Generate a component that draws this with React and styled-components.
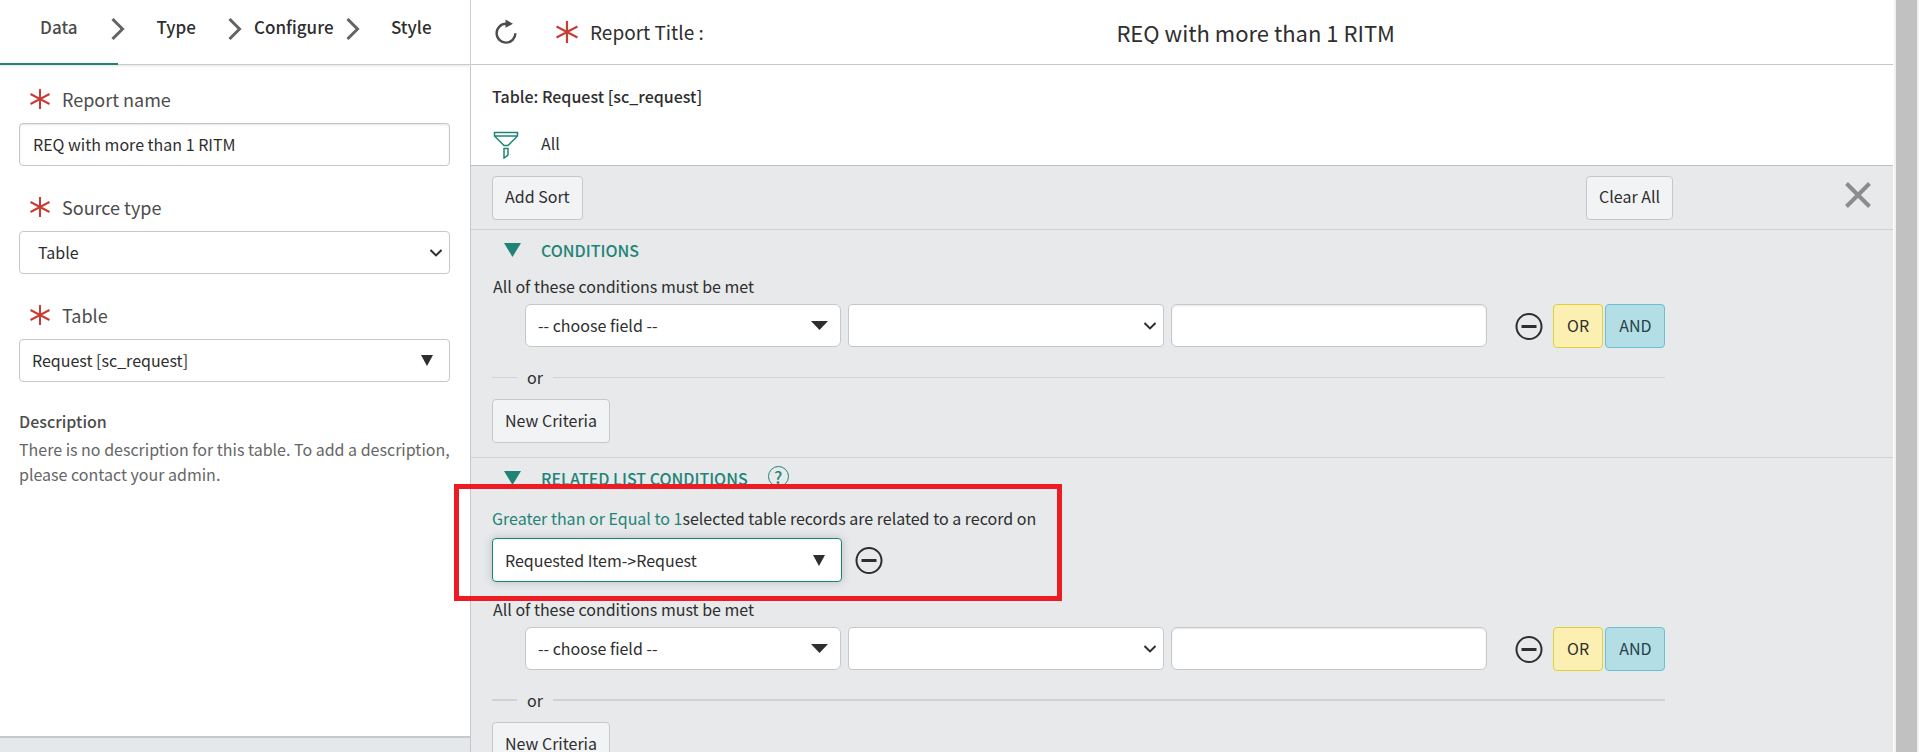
import React, { Fragment, useState } from "react";
import styled, { createGlobalStyle } from "styled-components";

const GlobalStyle = createGlobalStyle`
  * {
    box-sizing: border-box;
  }

  body {
    margin: 0;
    background: #fff;
    color: #2e2e2e;
    font-family: "Noto Sans CJK SC", "Noto Sans", sans-serif;
    font-size: 16px;
    line-height: 24px;
  }

  button,
  input,
  select {
    font: inherit;
    color: inherit;
  }
`;

const Page = styled.div`
  display: flex;
  height: 100vh;
  overflow: hidden;
`;

const Sidebar = styled.aside`
  display: flex;
  flex-direction: column;
  flex: 0 0 471px;
  border-right: 1px solid #c5c8ca;
`;

const Tabs = styled.nav`
  display: flex;
  align-items: center;
  height: 65px;
  border-bottom: 1px solid #cbcbcb;
  box-shadow: 0 1px 2px #e4e4e4;

  svg {
    flex: none;
    margin: 0 -7px 6px;
  }
`;

const Tab = styled.button`
  flex: 1 1 0;
  min-width: 0;
  height: 65px;
  padding: 0 0 8px;
  border: 0;
  border-bottom: 2px solid ${(props) => (props.$active ? "#1f8476" : "transparent")};
  background: none;
  color: ${(props) => (props.$active ? "#4c4c4c" : "#2e2e2e")};
  font-size: 17px;
  font-weight: 500;
  white-space: nowrap;
`;

const Form = styled.form`
  flex: 1;
  padding: 20px 20px 0 19px;
`;

const Field = styled.div`
  margin-bottom: 27px;
`;

const FieldLabel = styled.label`
  display: flex;
  align-items: center;
  gap: 12px;
  height: 28px;
  margin-bottom: 10px;
  padding-left: 11px;
  color: #4c4c4c;
  font-size: 18px;
`;

const TextInput = styled.input`
  display: block;
  width: 100%;
  height: 43px;
  padding: 0 13px 1px;
  border: 1px solid #c5c8ca;
  border-radius: ${(props) => props.$radius || 4}px;
  background: #fff;
  box-shadow: inset 0 1px 2px #e6e6e6;
`;

const SelectBox = styled.div`
  display: grid;
  align-items: center;
  width: ${(props) => props.$width || "100%"};

  > * {
    grid-area: 1 / 1;
  }

  svg {
    justify-self: end;
    margin-right: ${(props) => props.$inset || 8}px;
    pointer-events: none;
  }
`;

const Select = styled.select`
  width: 100%;
  height: ${(props) => (props.$focused ? 44 : 43)}px;
  padding: 0 36px 1px ${(props) => props.$pad || 12}px;
  appearance: none;
  border: 1px solid ${(props) => (props.$focused ? "#1f8476" : "#c5c8ca")};
  border-radius: ${(props) => props.$radius || 4}px;
  background: #fff;
  box-shadow: ${(props) => (props.$focused ? "0 0 8px #b5bdbd" : "none")};
`;

const Description = styled.section`
  color: #666;
  line-height: 25px;

  h2 {
    margin: 0 0 3px;
    color: #4c4c4c;
    font-size: 16px;
    font-weight: 500;
    line-height: 25px;
  }

  p {
    margin: 0;
  }
`;

const SidebarFooter = styled.footer`
  height: 16px;
  border-top: 2px solid #c8c8c8;
  background: #e4e8eb;
`;

const Main = styled.main`
  flex: 1;
  min-width: 0;
  border-right: 1px solid #fff;
`;

const Header = styled.header`
  display: flex;
  align-items: center;
  height: 65px;
  padding-left: 21px;
  border-bottom: 1px solid #c5c8ca;
`;

const IconButton = styled.button`
  display: flex;
  align-items: center;
  justify-content: center;
  width: 28px;
  height: 28px;
  padding: 0;
  border: 0;
  background: none;
  color: inherit;
`;

const TitleLabel = styled.label`
  display: flex;
  flex: 0 0 40%;
  align-items: center;
  gap: 12px;
  margin-left: 36px;
  font-size: 19px;
`;

const TitleInput = styled.input`
  flex: 1;
  min-width: 0;
  padding: 0;
  border: 0;
  background: none;
  font-size: 22px;
`;

const TableName = styled.h2`
  margin: 19px 0 0 21px;
  font-size: 16px;
  font-weight: 500;
  line-height: 24px;
`;

const Breadcrumb = styled.div`
  display: flex;
  align-items: center;
  gap: 22px;
  height: 44px;
  margin-top: 13px;
  padding-left: 22px;

  svg {
    margin-top: 4px;
  }

  a {
    color: inherit;
    text-decoration: none;
  }
`;

const FilterPanel = styled.div`
  border-top: 1px solid #bcc0c3;
  background: #e7e9eb;
`;

const Toolbar = styled.div`
  display: flex;
  align-items: center;
  justify-content: flex-end;
  height: 63px;
  padding: 0 21px;

  ${IconButton} {
    margin-bottom: 6px;
  }
`;

const Button = styled.button`
  height: 44px;
  padding: 0 12px 3px;
  border: 1px solid #c5c8ca;
  border-radius: 4px;
  background: #f1f3f5;
  white-space: nowrap;
`;

const AddSort = styled(Button)`
  margin-right: auto;
`;

const ClearAll = styled(Button)`
  margin-right: 171px;
`;

const Section = styled.section`
  padding: 8px 16% 14px 21px;
  border-top: 1px solid #cfd2d5;
`;

const SectionTitle = styled.h3`
  display: flex;
  align-items: center;
  gap: 20px;
  height: 24px;
  margin: 0;
  padding-left: 12px;
  color: #1f8476;
  font-size: 16px;
  font-weight: 500;
`;

const Hint = styled.p`
  margin: 0;
  padding: 12px 0 6px 1px;
`;

const ConditionRow = styled.div`
  display: grid;
  grid-template-columns: repeat(3, 1fr) auto;
  align-items: start;
  gap: 7px;
  padding-left: 33px;
`;

const RowActions = styled.div`
  display: flex;
  align-items: center;
  gap: 2px;
  margin-left: 21px;
`;

const LogicButton = styled(Button)`
  padding: 0 13px 3px;
  border-color: ${(props) => (props.$kind === "or" ? "#dfd037" : "#6cbfd3")};
  background: ${(props) => (props.$kind === "or" ? "#fbf0b2" : "#b4dee6")};
  color: ${(props) => (props.$kind === "or" ? "#2e2e2e" : "#264247")};

  ${IconButton} + & {
    margin-left: 8px;
  }
`;

const Divider = styled.div`
  display: flex;
  align-items: center;
  gap: 10px;
  margin: 17px 0 10px;

  &::before,
  &::after {
    content: "";
    width: 25px;
    height: ${(props) => props.$weight}px;
    background: #cfd3d6;
  }

  &::after {
    flex: 1;
  }
`;

const Relation = styled.div`
  position: relative;
  padding: 16px 0 3px;

  p {
    margin: 0 0 8px;
  }

  a {
    color: #1f8476;
    text-decoration: none;
  }
`;

const RelationPicker = styled.div`
  display: flex;
  align-items: center;
  gap: 13px;
`;

// red frame drawn over the relation, it also covers part of the heading
const Highlight = styled.div`
  position: absolute;
  top: -6px;
  left: -38px;
  width: 608px;
  height: 117px;
  border: 5px solid #ed1c24;
  pointer-events: none;
`;

const Scrollbar = styled.div`
  flex: 0 0 25px;
  padding: 0 2px;
  background: #f1f1f1;

  &::before {
    content: "";
    display: block;
    height: 100%;
    background: #c1c1c1;
  }
`;

const Required = ({ size = 20 }) => (
  <svg width={size} height={size} viewBox="0 0 20 20" stroke="#c83c36" strokeWidth="2" aria-hidden="true">
    <path d="M10 0V20M0.5 5L19.5 15M19.5 5L0.5 15" />
  </svg>
);

const Arrow = () => (
  <svg width="14" height="24" viewBox="0 0 14 24" fill="none" stroke="#636363" strokeWidth="3" aria-hidden="true">
    <path d="M1.5 2L11.5 12L1.5 22" />
  </svg>
);

const Chevron = () => (
  <svg width="12" height="8" viewBox="0 0 12 8" fill="none" stroke="#2e2e2e" strokeWidth="2" aria-hidden="true">
    <path d="M0.5 1L6 6.4L11.5 1" />
  </svg>
);

const Triangle = ({ width = 12, height = 11, color = "#2e2e2e" }) => (
  <svg width={width} height={height} viewBox="0 0 12 12" preserveAspectRatio="none" fill={color} aria-hidden="true">
    <path d="M0 0H12L6 12Z" />
  </svg>
);

const Refresh = () => (
  <svg width="22" height="26" viewBox="0 0 22 26" aria-hidden="true">
    <path d="M13 4.8H11A9.4 9.4 0 1 0 20.4 14.2" fill="none" stroke="#4c4c4c" strokeWidth="2.4" />
    <path d="M10.5 0.5L18 4.8L10.5 8.8Z" fill="#4c4c4c" />
  </svg>
);

const Funnel = () => (
  <svg width="26" height="28" viewBox="0 0 26 28" fill="none" stroke="#1f8476" strokeWidth="1.5" aria-hidden="true">
    <path d="M1.5 1.5H24.5V5L15 14.5H11L1.5 5ZM1.5 5H24.5M11 17.5H15V24L11 27Z" />
  </svg>
);

const Minus = () => (
  <svg width="28" height="28" viewBox="0 0 28 28" fill="none" stroke="#2e2e2e" aria-hidden="true">
    <circle cx="14" cy="14.5" r="12.5" strokeWidth="2" />
    <path d="M6.5 14.5H21.5" strokeWidth="3" />
  </svg>
);

const Close = () => (
  <svg width="26" height="26" viewBox="0 0 26 26" stroke="#8b8c8d" strokeWidth="4" aria-hidden="true">
    <path d="M1.5 1.5L24.5 24.5M24.5 1.5L1.5 24.5" />
  </svg>
);

const HelpMark = styled.button`
  width: 21px;
  height: 21px;
  margin-bottom: 4px;
  padding: 0;
  border: 1px solid #1f8476;
  border-radius: 50%;
  background: none;
  color: #1f8476;
  font-size: 17px;
  font-weight: 500;
  line-height: 17px;
`;

const tabs = ["Data", "Type", "Configure", "Style"];

const Conditions = ({ name, lineWeight = 1 }) => (
  <>
    <Hint>All of these conditions must be met</Hint>
    <ConditionRow>
      <SelectBox $inset={13}>
        <Select $radius={6} aria-label={`${name} field`}>
          <option>-- choose field --</option>
        </Select>
        <Triangle width={17} height={9} />
      </SelectBox>
      <SelectBox>
        <Select aria-label={`${name} operator`} />
        <Chevron />
      </SelectBox>
      <TextInput $radius={6} aria-label={`${name} value`} />
      <RowActions>
        <IconButton type="button" aria-label="Remove condition">
          <Minus />
        </IconButton>
        <LogicButton type="button" $kind="or">
          OR
        </LogicButton>
        <LogicButton type="button" $kind="and">
          AND
        </LogicButton>
      </RowActions>
    </ConditionRow>
    <Divider $weight={lineWeight}>or</Divider>
    <Button type="button">New Criteria</Button>
  </>
);

const App = () => {
  const [active, setActive] = useState("Data");
  const [name, setName] = useState("REQ with more than 1 RITM");

  return (
    <>
      <GlobalStyle />
      <Page>
        <Sidebar>
          <Tabs>
            {tabs.map((tab, index) => (
              <Fragment key={tab}>
                {index > 0 && <Arrow />}
                <Tab type="button" $active={tab === active} onClick={() => setActive(tab)}>
                  {tab}
                </Tab>
              </Fragment>
            ))}
          </Tabs>
          <Form>
            <Field>
              <FieldLabel htmlFor="report-name">
                <Required />
                Report name
              </FieldLabel>
              <TextInput id="report-name" value={name} onChange={(e) => setName(e.target.value)} />
            </Field>
            <Field>
              <FieldLabel htmlFor="source-type">
                <Required />
                Source type
              </FieldLabel>
              <SelectBox>
                <Select id="source-type" $pad={18}>
                  <option>Table</option>
                </Select>
                <Chevron />
              </SelectBox>
            </Field>
            <Field>
              <FieldLabel htmlFor="table">
                <Required />
                Table
              </FieldLabel>
              <SelectBox $inset={17}>
                <Select id="table">
                  <option>Request [sc_request]</option>
                </Select>
                <Triangle />
              </SelectBox>
            </Field>
            <Description>
              <h2>Description</h2>
              <p>There is no description for this table. To add a description, please contact your admin.</p>
            </Description>
          </Form>
          <SidebarFooter />
        </Sidebar>
        <Main>
          <Header>
            <IconButton type="button" aria-label="Refresh">
              <Refresh />
            </IconButton>
            <TitleLabel htmlFor="report-title">
              <Required size={22} />
              Report Title :
            </TitleLabel>
            <TitleInput id="report-title" value={name} onChange={(e) => setName(e.target.value)} />
          </Header>
          <TableName>Table: Request [sc_request]</TableName>
          <Breadcrumb>
            <Funnel />
            <a href="#all">All</a>
          </Breadcrumb>
          <FilterPanel>
            <Toolbar>
              <AddSort type="button">Add Sort</AddSort>
              <ClearAll type="button">Clear All</ClearAll>
              <IconButton type="button" aria-label="Close filter">
                <Close />
              </IconButton>
            </Toolbar>
            <Section>
              <SectionTitle>
                <Triangle width={17} height={14} color="#1f8476" />
                CONDITIONS
              </SectionTitle>
              <Conditions name="Condition" />
            </Section>
            <Section>
              <SectionTitle>
                <Triangle width={17} height={14} color="#1f8476" />
                RELATED LIST CONDITIONS
                <HelpMark type="button" aria-label="Help">
                  ?
                </HelpMark>
              </SectionTitle>
              <Relation>
                <p>
                  <a href="#quantity">Greater than or Equal to 1</a>selected table records are related to a record on
                </p>
                <RelationPicker>
                  <SelectBox $width="350px" $inset={17}>
                    <Select $focused aria-label="Related list">
                      <option>{"Requested Item->Request"}</option>
                    </Select>
                    <Triangle />
                  </SelectBox>
                  <IconButton type="button" aria-label="Remove related list">
                    <Minus />
                  </IconButton>
                </RelationPicker>
                <Highlight />
              </Relation>
              <Conditions name="Related condition" lineWeight={2} />
            </Section>
          </FilterPanel>
        </Main>
        <Scrollbar />
      </Page>
    </>
  );
};

export default App;
